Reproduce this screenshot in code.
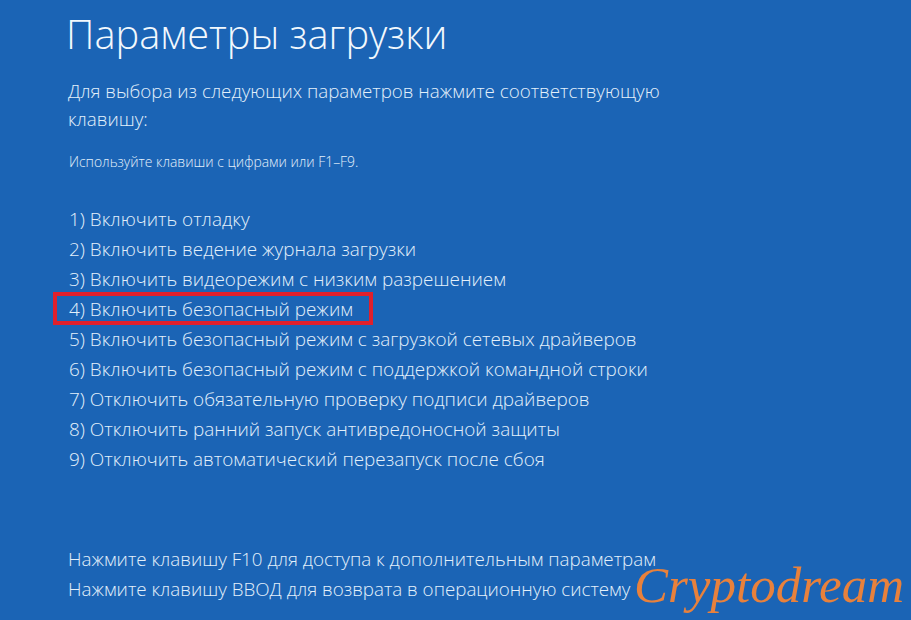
import React from "react";

const options = [
  "1) Включить отладку",
  "2) Включить ведение журнала загрузки",
  "3) Включить видеорежим с низким разрешением",
  "4) Включить безопасный режим",
  "5) Включить безопасный режим с загрузкой сетевых драйверов",
  "6) Включить безопасный режим с поддержкой командной строки",
  "7) Отключить обязательную проверку подписи драйверов",
  "8) Отключить ранний запуск антивредоносной защиты",
  "9) Отключить автоматический перезапуск после сбоя",
];

export default function App() {
  return (
    <div className="relative h-[620px] w-[911px] overflow-hidden bg-[#1b64b5] pl-[68px] pt-[10px] text-[#e3f0fb] font-['Open_Sans',sans-serif]">
      {/* Heading */}
      <h1 className="ml-[-2px] text-[39.8px] font-light leading-[48px] text-[#f2f8fd]">Параметры загрузки</h1>

      <p className="mt-[19px] w-[620px] text-[18.8px] font-light leading-[28px]">
        Для выбора из следующих параметров нажмите соответствующую клавишу:
      </p>
      <p className="mt-[20px] ml-[1px] text-[13.9px] font-light leading-[18px]">Используйте клавиши с цифрами или F1–F9.</p>

      {/* Options */}
      <ul className="mt-[33px] ml-[1px] text-[18.9px] font-light leading-[30px]">
        {options.map((item, i) => (
          <li key={item} className="relative">
            {item}
            {i === 3 && (
              <span className="absolute left-[-16px] top-[-2px] h-[33px] w-[320px] border-[4px] border-[#e0202c]" />
            )}
          </li>
        ))}
      </ul>

      <div className="mt-[70px] text-[18.8px] font-light leading-[30px]">
        <p>Нажмите клавишу F10 для доступа к дополнительным параметрам</p>
        <p>Нажмите клавишу ВВОД для возврата в операционную систему</p>
      </div>

      {/* Watermark */}
      <span className="absolute left-[634px] top-[550px] text-[51px] italic leading-[70px] text-[#e8813c] font-['Liberation_Serif',cursive]">
        Cryptodream
      </span>
    </div>
  );
}
